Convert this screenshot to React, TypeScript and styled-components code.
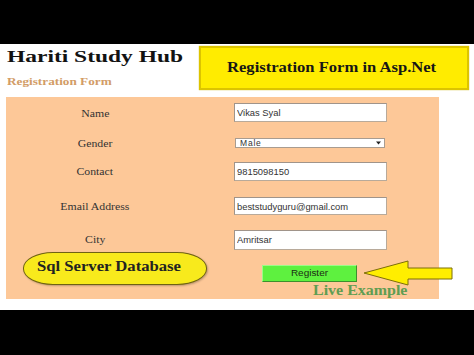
import React from "react";
import styled, { createGlobalStyle } from "styled-components";

const GlobalStyle = createGlobalStyle`
  html, body { margin: 0; padding: 0; background: #000; }
  body { width: 474px; height: 355px; overflow: hidden; }
`;

const Frame = styled.div`
  width: 474px;
  height: 355px;
  display: flex;
  flex-direction: column;
  background: #000;
`;

const Letterbox = styled.div<{ $h: number }>`
  height: ${(p) => p.$h}px;
  flex: none;
  background: #000;
`;

const Stage = styled.main`
  height: 266px;
  flex: none;
  background: #fff;
  display: flex;
  flex-direction: column;
`;

const Header = styled.header`
  height: 53px;
  flex: none;
  display: flex;
  justify-content: space-between;
  align-items: flex-start;
`;

const Brand = styled.div`
  padding: 3.5px 0 0 7px;
  display: flex;
  flex-direction: column;
  align-items: flex-start;
`;

const Stretch = styled.span<{ $sx: number; $origin?: string }>`
  display: inline-block;
  white-space: nowrap;
  transform: scaleX(${(p) => p.$sx});
  transform-origin: ${(p) => p.$origin ?? "left"} center;
`;

const Title = styled.h1`
  margin: 0;
  font: bold 17px/17px "Liberation Serif", serif;
  color: #121212;
`;

const Subtitle = styled.h2`
  margin: 11px 0 0;
  font: bold 10.5px/12px "Liberation Serif", serif;
  color: #d29c66;
`;

const Banner = styled.div`
  margin: 2px 5px 0 0;
  width: 270px;
  height: 44px;
  box-sizing: border-box;
  background: #ffec00;
  border: 2px solid #dcc400;
  box-shadow: 0 0 1px #c9b200;
  display: flex;
  align-items: center;
  padding: 0 0 3px 26px;
  font: bold 15.5px/17px "Liberation Serif", serif;
  color: #161616;
`;

const Panel = styled.section`
  margin-left: 6px;
  width: 433px;
  height: 202px;
  flex: none;
  background: #fdc898;
  display: flex;
  flex-direction: column;
`;

const FieldGrid = styled.div`
  display: grid;
  grid-template-columns: 178px 153px;
  grid-template-rows: 31px 30px 27px 42px 25px;
  column-gap: 50px;
  align-items: center;
`;

const Label = styled.label<{ $nudge: number }>`
  justify-self: center;
  padding-top: ${(p) => p.$nudge}px;
  font: 9.5px/11px "Liberation Serif", serif;
  color: #333;
`;

const TextInput = styled.input<{ $h: number }>`
  width: 153px;
  height: ${(p) => p.$h}px;
  box-sizing: border-box;
  margin: 0;
  padding: 0 0 0 2px;
  border: 1px solid #b8aa9a;
  border-top-color: #a0948a;
  border-left-color: #a0948a;
  background: #fff;
  font: 9.4px "Liberation Sans", Arial, sans-serif;
  color: #333;
  outline: none;
`;

const SelectBox = styled.div`
  width: 150px;
  height: 10px;
  margin-left: 1px;
  box-sizing: border-box;
  border: 1px solid #a89c90;
  background: #fff;
  display: flex;
  align-items: center;
  justify-content: space-between;
  padding: 0 3px 0 4px;
  font: 8.5px/8px "Liberation Sans", Arial, sans-serif;
  letter-spacing: 0.8px;
  color: #333;
`;

const Footer = styled.div`
  position: relative;
  display: flex;
  align-items: flex-start;
`;

const DbBadge = styled.div`
  margin-left: 17px;
  width: 184px;
  height: 33px;
  box-sizing: border-box;
  background: #f8ea1c;
  border: 1.5px solid #6e6214;
  border-radius: 30px / 16px;
  box-shadow: 1px 1px 2px rgba(0, 0, 0, 0.25);
  display: flex;
  align-items: center;
  padding: 0 0 4px 12.5px;
  font: bold 15px/17px "Liberation Serif", serif;
  color: #222;
`;

const Actions = styled.div`
  margin-left: 55px;
  padding-top: 13px;
  display: flex;
  flex-direction: column;
  align-items: flex-start;
`;

const RegisterButton = styled.button`
  width: 95px;
  height: 17px;
  box-sizing: border-box;
  margin: 0;
  padding: 0;
  background: #5ef13f;
  border: 1px solid;
  border-color: #9dfb88 #3d8f2e #3d8f2e #9dfb88;
  display: flex;
  align-items: center;
  justify-content: center;
  font: 8.3px/9px "Liberation Sans", Arial, sans-serif;
  color: #1c2e14;
`;

const LiveTag = styled.span`
  margin: 2px 0 0 51px;
  font: bold 14px/14px "Liberation Serif", serif;
  color: #5f9d52;
`;

const Pointer = styled.svg`
  position: absolute;
  left: 357px;
  top: 8px;
  width: 92px;
  height: 28px;
  overflow: visible;
`;

const fields = [
  { label: "Name", value: "Vikas Syal", h: 19, nudge: 4 },
  { label: "Gender", select: "Male", nudge: 2 },
  { label: "Contact", value: "9815098150", h: 19, nudge: 2 },
  { label: "Email Address", value: "beststudyguru@gmail.com", h: 18, nudge: 2 },
  { label: "City", value: "Amritsar", h: 20, nudge: 2 },
];

export default function App() {
  return (
    <Frame>
      <GlobalStyle />
      <Letterbox $h={44} />
      <Stage>
        <Header>
          <Brand>
            <Title>
              <Stretch $sx={1.38}>Hariti Study Hub</Stretch>
            </Title>
            <Subtitle>
              <Stretch $sx={1.26}>Registration Form</Stretch>
            </Subtitle>
          </Brand>
          <Banner>
            <Stretch $sx={1.07}>Registration Form in Asp.Net</Stretch>
          </Banner>
        </Header>
        <Panel>
          <FieldGrid>
            {fields.map((f) => (
              <React.Fragment key={f.label}>
                <Label $nudge={f.nudge}>
                  <Stretch $sx={1.24} $origin="center">
                    {f.label}
                  </Stretch>
                </Label>
                {f.select ? (
                  <SelectBox>
                    <span>{f.select}</span>
                    <svg width="5" height="4" viewBox="0 0 5 4">
                      <path d="M0 0.5 H5 L2.5 3.5 Z" fill="#222" />
                    </svg>
                  </SelectBox>
                ) : (
                  <TextInput $h={f.h ?? 19} readOnly value={f.value} />
                )}
              </React.Fragment>
            ))}
          </FieldGrid>
          <Footer>
            <DbBadge>
              <Stretch $sx={1.11}>Sql Server Database</Stretch>
            </DbBadge>
            <Actions>
              <RegisterButton type="button">
                <Stretch $sx={1.2} $origin="center">
                  Register
                </Stretch>
              </RegisterButton>
              <LiveTag>
                <Stretch $sx={1.14}>Live Example</Stretch>
              </LiveTag>
            </Actions>
            <Pointer viewBox="0 0 92 28">
              <path
                d="M1 13 L45 1 L45 8 L89 8 L89 19 L45 19 L45 25 Z"
                fill="#ffee00"
                stroke="#7d6e08"
                strokeWidth="1"
                strokeLinejoin="miter"
              />
            </Pointer>
          </Footer>
        </Panel>
      </Stage>
      <Letterbox $h={45} />
    </Frame>
  );
}
